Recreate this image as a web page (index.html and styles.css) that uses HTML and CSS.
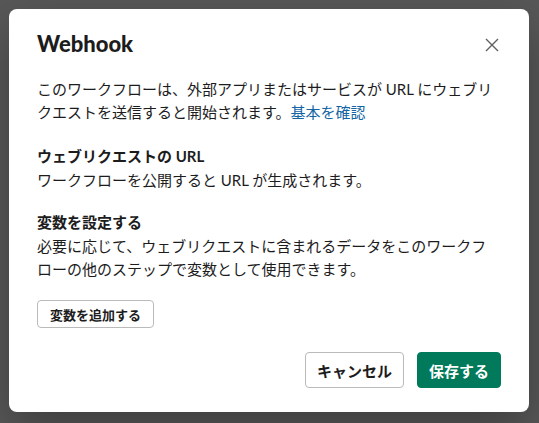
FILE: index.html
```html
<!DOCTYPE html>
<html lang="ja">
<head>
    <meta charset="UTF-8">
    <title>Webhook</title>
    <link rel="stylesheet" href="styles.css">
</head>
<body>
    <div class="modal">
        <div class="modal-header">
            <h1>Webhook</h1>
            <button class="close" aria-label="閉じる">
                <svg width="14" height="14" viewBox="0 0 14 14">
                    <path d="M1 1 L13 13 M13 1 L1 13" stroke="#616061" stroke-width="1.4" fill="none"/>
                </svg>
            </button>
        </div>
        <div class="modal-body">
            <p class="intro">このワークフローは、外部アプリまたはサービスが URL にウェブリクエストを送信すると開始されます。<a href="#">基本を確認</a></p>

            <div class="section">
                <h3>ウェブリクエストの URL</h3>
                <p>ワークフローを公開すると URL が生成されます。</p>
            </div>

            <div class="section second">
                <h3>変数を設定する</h3>
                <p>必要に応じて、ウェブリクエストに含まれるデータをこのワークフローの他のステップで変数として使用できます。</p>
            </div>

            <button class="btn small">変数を追加する</button>
        </div>
        <div class="modal-footer">
            <button class="btn">キャンセル</button>
            <button class="btn primary">保存する</button>
        </div>
    </div>
</body>
</html>
```

FILE: styles.css
```css
html, body {
    height: 100%;
}
body {
    margin: 0;
    padding: 9px;
    box-sizing: border-box;
    background-color: #585858;
    font-family: Lato, "Noto Sans CJK JP", sans-serif;
    color: #1d1c1d;
}
.modal {
    width: 520px;
    height: 403px;
    box-sizing: border-box;
    background: #fff;
    border-radius: 8px;
    box-shadow: 0 18px 48px rgba(0,0,0,0.3);
    padding: 21px 28px 24px 28px;
    display: flex;
    flex-direction: column;
}
.modal-header {
    display: flex;
    justify-content: space-between;
    align-items: center;
    height: 28px;
}
.modal-header h1 {
    margin: 0;
    font-size: 22px;
    font-weight: 900;
    line-height: 28px;
}
.close {
    border: none;
    background: none;
    padding: 0;
    margin-right: 2px;
    margin-top: 2px;
    width: 14px;
    height: 14px;
    cursor: pointer;
}
.close svg {
    display: block;
}
.modal-body {
    margin-top: 20px;
    font-size: 15px;
    line-height: 23px;
}
.modal-body p {
    margin: 0;
}
.intro a {
    color: #1264a3;
    text-decoration: none;
}
.section {
    margin-top: 21px;
}
.section.second {
    margin-top: 19px;
}
.section h3 {
    margin: 0;
    font-size: 15px;
    font-weight: 700;
    line-height: 23px;
}
.section h3 + p {
    margin-top: 1px;
}
.btn {
    font-family: Lato, "Noto Sans CJK JP", sans-serif;
    font-size: 15px;
    font-weight: 700;
    color: #1d1c1d;
    background: #fff;
    border: 1px solid #bbbabb;
    border-radius: 4px;
    height: 36px;
    padding: 0 11px;
    cursor: pointer;
}
.btn.small {
    margin-top: 19px;
    font-size: 13px;
    height: 28px;
    padding: 0 12px;
    display: block;
}
.btn.primary {
    background: #007a5a;
    border-color: #007a5a;
    color: #fff;
}
.modal-footer {
    margin-top: auto;
    display: flex;
    justify-content: flex-end;
    gap: 13px;
}
```
